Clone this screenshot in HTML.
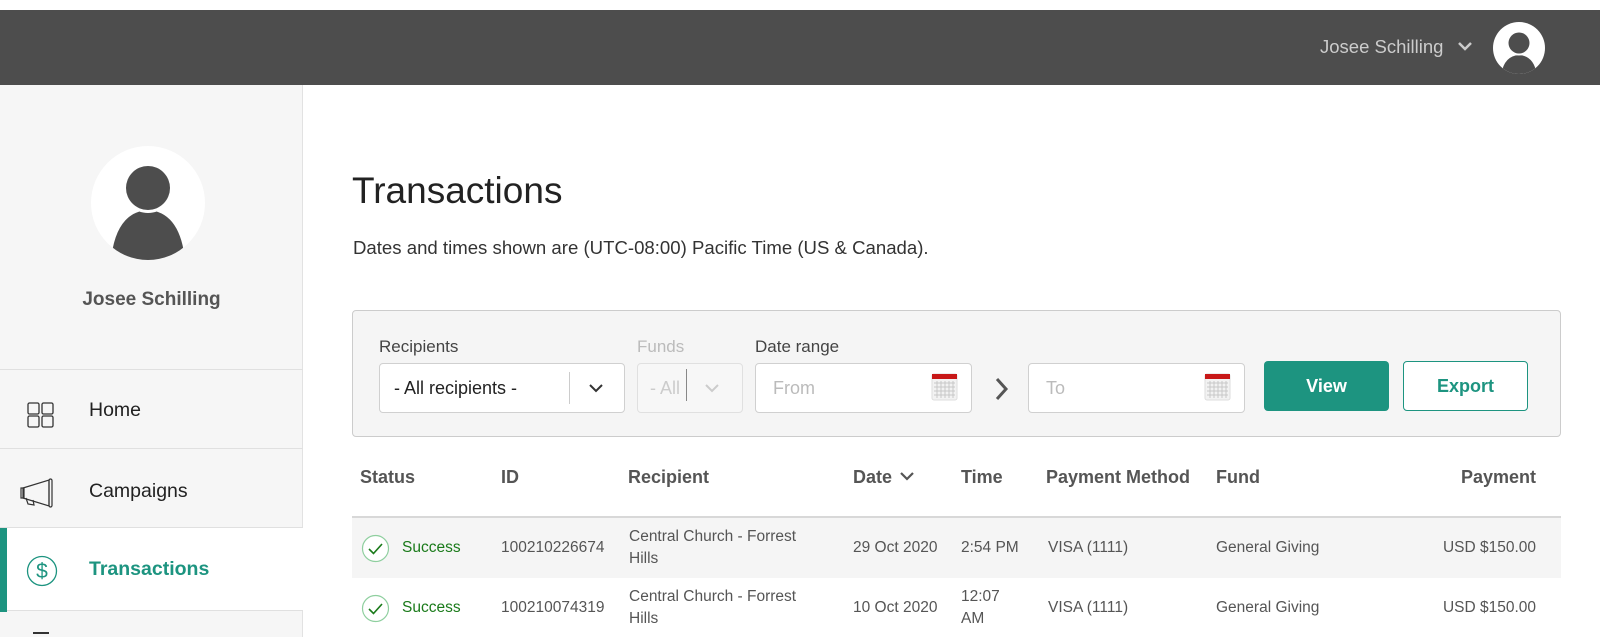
<!DOCTYPE html>
<html><head><meta charset="utf-8"><style>
*{box-sizing:border-box;margin:0;padding:0}
body{width:1600px;height:637px;overflow:hidden;background:#fff;font-family:"Liberation Sans",Arial,sans-serif;position:relative;color:#333}
.abs{position:absolute}
.top{left:0;top:10px;width:1600px;height:75px;background:#4d4d4d}
.side{left:0;top:85px;width:303px;height:552px;background:#f6f6f6;border-right:1px solid #e2e2e2}
.nav{position:absolute;left:0;width:303px;border-top:1px solid #e0e0e0;display:flex;align-items:center}
.nav span{position:absolute;left:89px;font-size:19.5px;color:#222}
.th{position:absolute;top:467px;font-size:18px;font-weight:bold;color:#555}
.td{position:absolute;font-size:15.5px;color:#555;line-height:22px}
.inp{position:absolute;top:363px;height:50px;background:#fff;border:1px solid #d0d0d0;border-radius:4px}
.lbl{position:absolute;top:337px;font-size:17px;color:#444}
</style></head><body>
<div class="abs top"></div>
<div class="abs" style="left:1320px;top:36px;font-size:18.5px;color:#ccc">Josee Schilling</div>
<svg class="abs" style="left:1457px;top:41px" width="16" height="12"><path d="M2 2l6 6 6-6" stroke="#ccc" stroke-width="2.5" fill="none"/></svg>
<svg class="abs" style="left:1492px;top:21px" width="54" height="54" viewBox="0 0 54 54"><defs><clipPath id="c"><circle cx="27" cy="27" r="26"/></clipPath></defs><circle cx="27" cy="27" r="26" fill="#fff"/><g clip-path="url(#c)"><path d="M9 56 Q11 35 27 34 Q43 35 45 56Z" fill="#4d4d4d"/><circle cx="27" cy="22" r="12.5" fill="#fff"/><circle cx="27" cy="22" r="10.5" fill="#4d4d4d"/></g></svg>

<div class="abs side"></div>
<svg class="abs" style="left:91px;top:146px" width="114" height="114" viewBox="0 0 114 114"><defs><clipPath id="a"><circle cx="57" cy="57" r="57"/></clipPath></defs><circle cx="57" cy="57" r="57" fill="#fff"/><g clip-path="url(#a)"><path d="M20 114 Q25 66 57 64 Q89 66 94 114Z" fill="#4d4d4d"/><circle cx="57" cy="42" r="25" fill="#fff"/><circle cx="57" cy="42" r="22" fill="#4d4d4d"/></g></svg>
<div class="abs" style="left:0;width:303px;top:289px;text-align:center;font-size:19px;font-weight:bold;color:#555">Josee Schilling</div>

<div class="nav" style="top:369px;height:79px"><svg style="position:absolute;left:27px;top:32px" width="30" height="27"><g fill="none" stroke="#333" stroke-width="1.3"><rect x="1" y="1" width="11" height="11" rx="1.5"/><rect x="15" y="1" width="11" height="11" rx="1.5"/><rect x="1" y="14" width="11" height="11" rx="1.5"/><rect x="15" y="14" width="11" height="11" rx="1.5"/></g></svg><span style="top:29px">Home</span></div>
<div class="nav" style="top:448px;height:79px"><svg style="position:absolute;left:20px;top:28px" width="36" height="32"><g fill="none" stroke="#333" stroke-width="1.2"><path d="M3 11 L29 3 L29 29 L3 21Z"/><rect x="1" y="11" width="3" height="10"/><path d="M6 21 L8 27 L14 28 L13 23"/><rect x="29" y="2" width="3" height="28" rx="1.5"/></g></svg><span style="top:31px">Campaigns</span></div>
<div class="nav" style="top:527px;height:84px;background:#fff;border-bottom:1px solid #e0e0e0"><div style="position:absolute;left:0;top:0;width:7px;height:84px;background:#1d9480"></div><svg style="position:absolute;left:26px;top:27px" width="32" height="32"><circle cx="16" cy="16" r="14.5" fill="none" stroke="#1d9480" stroke-width="1.3"/><text x="16" y="23" text-anchor="middle" font-size="21" fill="#1d9480" font-family="Liberation Sans">$</text></svg><span style="color:#1d9480;font-weight:bold;top:30px">Transactions</span></div>
<div class="abs" style="left:33px;top:632px;width:16px;height:2px;background:#333"></div>

<div class="abs" style="left:352px;top:170px;font-size:37px;font-weight:300;color:#222">Transactions</div>
<div class="abs" style="left:353px;top:237px;font-size:18.6px;color:#333">Dates and times shown are (UTC-08:00) Pacific Time (US &amp; Canada).</div>

<div class="abs" style="left:352px;top:310px;width:1209px;height:127px;background:#f5f5f5;border:1px solid #ccc;border-radius:4px"></div>
<div class="lbl" style="left:379px">Recipients</div>
<div class="lbl" style="left:637px;color:#bbb">Funds</div>
<div class="lbl" style="left:755px">Date range</div>
<div class="inp" style="left:379px;width:246px"><span style="position:absolute;left:14px;top:14px;font-size:18px;color:#222">- All recipients -</span><div style="position:absolute;left:189px;top:8px;width:1px;height:32px;background:#ccc"></div><svg style="position:absolute;left:208px;top:19px" width="16" height="12"><path d="M2 2l6 6 6-6" stroke="#333" stroke-width="2" fill="none"/></svg></div>
<div class="inp" style="left:637px;width:106px;background:#f7f7f7;border-color:#e0e0e0"><span style="position:absolute;left:12px;top:14px;font-size:18px;color:#ccc">- All</span><div style="position:absolute;left:48px;top:5px;width:1px;height:32px;background:#888"></div><svg style="position:absolute;left:66px;top:19px" width="16" height="12"><path d="M2 2l6 6 6-6" stroke="#ccc" stroke-width="2" fill="none"/></svg></div>
<div class="inp" style="left:755px;width:217px"><span style="position:absolute;left:17px;top:14px;font-size:18px;color:#bbb">From</span><svg style="position:absolute;left:175px;top:9px" width="27" height="28"><rect x="1" y="1" width="25" height="26" rx="2" fill="#f2f2f2" stroke="#ddd"/><rect x="1" y="1" width="25" height="5" fill="#c81818"/><g stroke="#c8c8c8" stroke-width="1"><path d="M3 10H24M3 14H24M3 18H24M3 22H24M6 8V25M10 8V25M14 8V25M18 8V25M22 8V25"/></g></svg></div>
<svg class="abs" style="left:994px;top:377px" width="16" height="24"><path d="M3 2l9 10-9 10" stroke="#555" stroke-width="3" fill="none"/></svg>
<div class="inp" style="left:1028px;width:217px"><span style="position:absolute;left:17px;top:14px;font-size:18px;color:#bbb">To</span><svg style="position:absolute;left:175px;top:9px" width="27" height="28"><rect x="1" y="1" width="25" height="26" rx="2" fill="#f2f2f2" stroke="#ddd"/><rect x="1" y="1" width="25" height="5" fill="#c81818"/><g stroke="#c8c8c8" stroke-width="1"><path d="M3 10H24M3 14H24M3 18H24M3 22H24M6 8V25M10 8V25M14 8V25M18 8V25M22 8V25"/></g></svg></div>
<div class="abs" style="left:1264px;top:361px;width:125px;height:50px;background:#1d9480;border-radius:4px;color:#fff;font-weight:bold;font-size:18px;text-align:center;line-height:50px">View</div>
<div class="abs" style="left:1403px;top:361px;width:125px;height:50px;background:#fff;border:1px solid #1d9480;border-radius:4px;color:#1d9480;font-weight:bold;font-size:18px;text-align:center;line-height:48px">Export</div>

<div class="th" style="left:360px">Status</div>
<div class="th" style="left:501px">ID</div>
<div class="th" style="left:628px">Recipient</div>
<div class="th" style="left:853px">Date <svg width="16" height="12" style="margin-left:2px"><path d="M2 2l6 6 6-6" stroke="#555" stroke-width="2.2" fill="none"/></svg></div>
<div class="th" style="left:961px">Time</div>
<div class="th" style="left:1046px">Payment Method</div>
<div class="th" style="left:1216px">Fund</div>
<div class="th" style="left:1300px;width:236px;text-align:right">Payment</div>
<div class="abs" style="left:352px;top:516px;width:1209px;height:2px;background:#d8d8d8"></div>
<div class="abs" style="left:352px;top:518px;width:1209px;height:60px;background:#f5f5f5"></div>

<svg class="abs" style="left:361px;top:534px" width="29" height="29"><circle cx="14.5" cy="14.5" r="13" fill="#fff" stroke="#8fcf9f" stroke-width="1.2"/><path d="M8 15l4.5 4.5L21 10" stroke="#1a7a1a" stroke-width="1.6" fill="none"/></svg>
<div class="td" style="left:402px;top:537px;color:#1a7a1a">Success</div>
<div class="td" style="left:501px;top:537px">100210226674</div>
<div class="td" style="left:629px;top:526px">Central Church - Forrest<br>Hills</div>
<div class="td" style="left:853px;top:537px">29 Oct 2020</div>
<div class="td" style="left:961px;top:537px">2:54 PM</div>
<div class="td" style="left:1048px;top:537px">VISA (1111)</div>
<div class="td" style="left:1216px;top:537px">General Giving</div>
<div class="td" style="left:1336px;top:537px;width:200px;text-align:right">USD $150.00</div>

<svg class="abs" style="left:361px;top:594px" width="29" height="29"><circle cx="14.5" cy="14.5" r="13" fill="#fff" stroke="#8fcf9f" stroke-width="1.2"/><path d="M8 15l4.5 4.5L21 10" stroke="#1a7a1a" stroke-width="1.6" fill="none"/></svg>
<div class="td" style="left:402px;top:597px;color:#1a7a1a">Success</div>
<div class="td" style="left:501px;top:597px">100210074319</div>
<div class="td" style="left:629px;top:586px">Central Church - Forrest<br>Hills</div>
<div class="td" style="left:853px;top:597px">10 Oct 2020</div>
<div class="td" style="left:961px;top:586px">12:07<br>AM</div>
<div class="td" style="left:1048px;top:597px">VISA (1111)</div>
<div class="td" style="left:1216px;top:597px">General Giving</div>
<div class="td" style="left:1336px;top:597px;width:200px;text-align:right">USD $150.00</div>
</body></html>
